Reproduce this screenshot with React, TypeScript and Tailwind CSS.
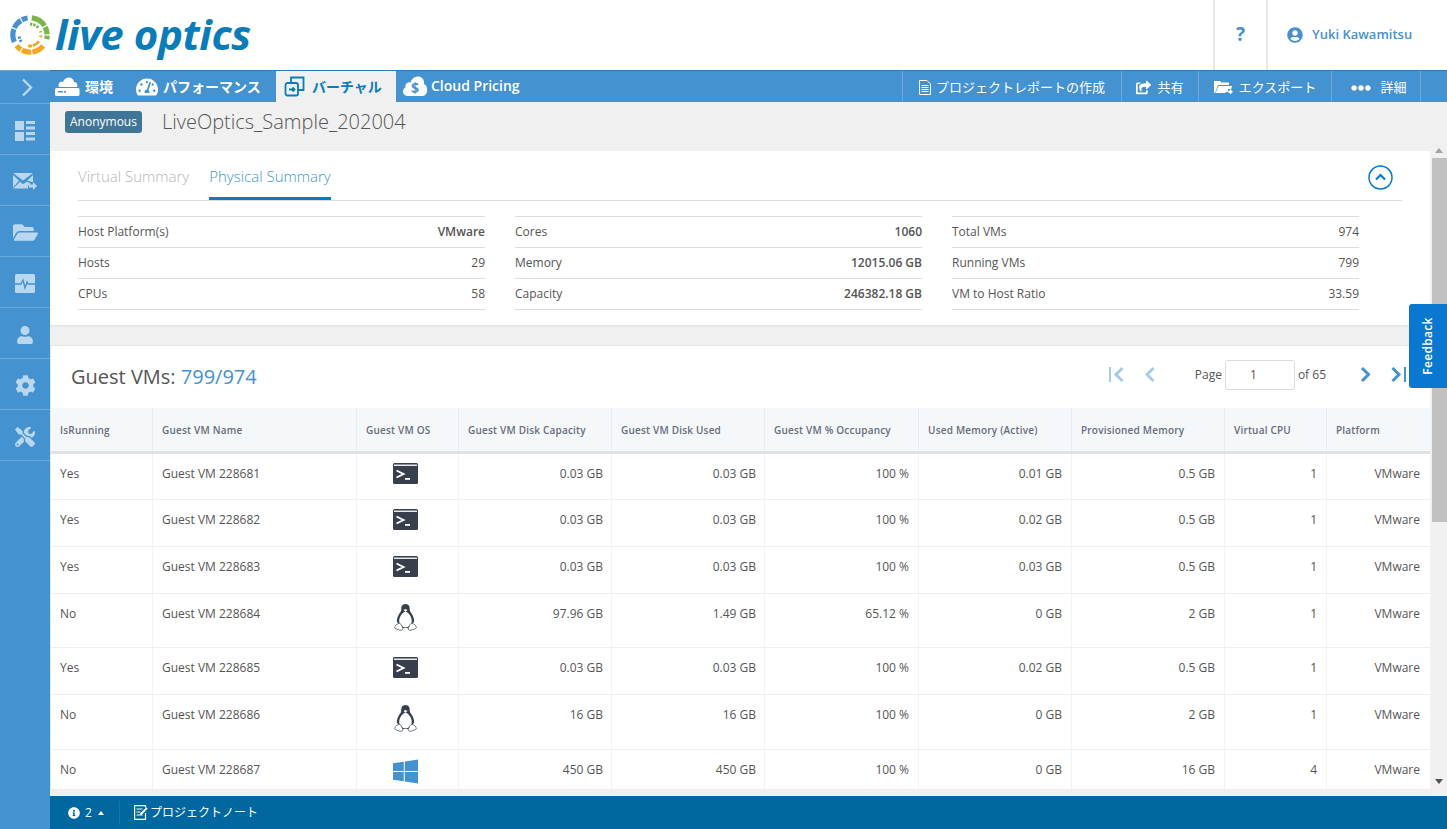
import { FaCog, FaEllipsisH, FaFolderOpen, FaInfoCircle, FaShareSquare, FaTachometerAlt, FaTools, FaUser, FaUserCircle } from "react-icons/fa";

const JP = "font-['Open_Sans','Noto_Sans_CJK_JP',sans-serif]";

type VmRow = {
  running: string;
  name: string;
  os: "terminal" | "linux" | "windows";
  capacity: string;
  used: string;
  occupancy: string;
  active: string;
  provisioned: string;
  cpu: string;
  height: string;
};

const rows: VmRow[] = [
  { running: "Yes", name: "Guest VM 228681", os: "terminal", capacity: "0.03 GB", used: "0.03 GB", occupancy: "100 %", active: "0.01 GB", provisioned: "0.5 GB", cpu: "1", height: "h-[46px]" },
  { running: "Yes", name: "Guest VM 228682", os: "terminal", capacity: "0.03 GB", used: "0.03 GB", occupancy: "100 %", active: "0.02 GB", provisioned: "0.5 GB", cpu: "1", height: "h-[47px]" },
  { running: "Yes", name: "Guest VM 228683", os: "terminal", capacity: "0.03 GB", used: "0.03 GB", occupancy: "100 %", active: "0.03 GB", provisioned: "0.5 GB", cpu: "1", height: "h-[47px]" },
  { running: "No", name: "Guest VM 228684", os: "linux", capacity: "97.96 GB", used: "1.49 GB", occupancy: "65.12 %", active: "0 GB", provisioned: "2 GB", cpu: "1", height: "h-[54px]" },
  { running: "Yes", name: "Guest VM 228685", os: "terminal", capacity: "0.03 GB", used: "0.03 GB", occupancy: "100 %", active: "0.02 GB", provisioned: "0.5 GB", cpu: "1", height: "h-[47px]" },
  { running: "No", name: "Guest VM 228686", os: "linux", capacity: "16 GB", used: "16 GB", occupancy: "100 %", active: "0 GB", provisioned: "2 GB", cpu: "1", height: "h-[55px]" },
  { running: "No", name: "Guest VM 228687", os: "windows", capacity: "450 GB", used: "450 GB", occupancy: "100 %", active: "0 GB", provisioned: "16 GB", cpu: "4", height: "h-[40px]" },
];

const headers = ["IsRunning", "Guest VM Name", "Guest VM OS", "Guest VM Disk Capacity", "Guest VM Disk Used", "Guest VM % Occupancy", "Used Memory (Active)", "Provisioned Memory", "Virtual CPU", "Platform"];

const summary = [
  [["Host Platform(s)", "VMware"], ["Hosts", "29"], ["CPUs", "58"]],
  [["Cores", "1060"], ["Memory", "12015.06 GB"], ["Capacity", "246382.18 GB"]],
  [["Total VMs", "974"], ["Running VMs", "799"], ["VM to Host Ratio", "33.59"]],
];

const COLS = "grid grid-cols-[102px_204px_102px_153px_153px_154px_153px_153px_102px_103px]";
// right padding per numeric column, the source table isn't quite even
const CELL_PAD = ["pr-[8px]", "pr-[8px]", "pr-[9px]", "pr-[9px]", "pr-[9px]", "pr-[9px]", "pr-[10px]"];

function arc(r: number, from: number, to: number) {
  const pt = (a: number) => {
    const t = ((a - 90) * Math.PI) / 180;
    return `${(30 + r * Math.cos(t)).toFixed(2)} ${(30 + r * Math.sin(t)).toFixed(2)}`;
  };
  return `M${pt(from)} A${r} ${r} 0 0 1 ${pt(to)}`;
}

function LogoMark() {
  const outer: [string, number, number][] = [
    ["#7ab648", 6, 58], ["#7ab648", 62, 88], ["#7ab648", 92, 104],
    ["#f5a623", 130, 172], ["#f5a623", 176, 208], ["#f5a623", 212, 232],
    ["#4a90d0", 246, 290], ["#4a90d0", 294, 328], ["#4a90d0", 332, 352],
  ];
  const inner: [string, number, number][] = [
    ["#7ab648", 0, 12], ["#7ab648", 18, 30], ["#7ab648", 36, 48], ["#7ab648", 70, 76],
    ["#f5a623", 92, 102], ["#f5a623", 125, 165], ["#f5a623", 170, 190],
    ["#4a90d0", 232, 244], ["#4a90d0", 250, 262],
  ];
  return (
    <svg width="40" height="40" viewBox="9 9 42 42" aria-hidden>
      {outer.map(([c, a, b]) => (
        <path key={`o${a}`} d={arc(18, a, b)} fill="none" stroke={c} strokeWidth="5.500" />
      ))}
      {inner.map(([c, a, b]) => (
        <path key={`i${a}`} d={arc(11.5, a, b)} fill="none" stroke={c} strokeWidth="3" />
      ))}
    </svg>
  );
}

function TerminalIcon() {
  return (
    <svg width="25" height="21" viewBox="0 0 25 21" aria-hidden>
      <rect width="25" height="21" rx="1.5" fill="#373f4d" />
      <rect x="1" y="1.5" width="23" height="1.5" fill="#e8e8e8" />
      <path d="M3.500 7.500l7 3.500-7 3.500" fill="none" stroke="#fff" strokeWidth="1.900" />
      <rect x="12" y="15" width="5" height="1.8" fill="#fff" />
    </svg>
  );
}

function TuxIcon() {
  return (
    <svg width="25" height="30" viewBox="0 0 25 30" aria-hidden>
      <path d="M12.500 1c-3.400 0-4.400 2.800-4.200 5.600.1 2-2 3.600-3.300 6.600-.8 1.800-1.300 3.600-1.100 5.400L8 25h9l4.100-6.400c.2-1.800-.3-3.600-1.100-5.400-1.300-3-3.400-4.600-3.300-6.600C16.900 3.800 15.900 1 12.500 1z" fill="#373f4d" />
      <path d="M12.500 8.500c-3 1-6.300 5-6.300 9.500 0 3.500 3 6.500 6.300 6.500s6.300-3 6.300-6.500c0-4.500-3.300-8.500-6.300-9.500z" fill="#fff" />
      <path d="M10.500 7l2-1 2 1-2 1.800z" fill="#fff" />
      <path d="M4.500 21c1-1 2.600-.8 3.500.5l1.800 3.500c.5 1.600-1 2.700-2.800 2.200l-4-1.300c-1.300-.5-1.700-1.200-1-2.400.6-1 .5-1.700 2.500-2.500zM20.500 21c-1-1-2.600-.8-3.500.5L15.200 25c-.5 1.600 1 2.700 2.800 2.200l4-1.300c1.300-.5 1.700-1.200 1-2.400-.6-1-.5-1.700-2.500-2.500z" fill="#fff" stroke="#373f4d" strokeWidth="0.7" />
    </svg>
  );
}

function WindowsIcon() {
  return (
    <svg width="25" height="25" viewBox="0 0 25 25" fill="#4592d0" aria-hidden>
      <path d="M0 4.200l10.800-1.500v9.200H0zM11.800 2.500L25 .5v11.400H11.800zM0 12.900h10.800v9.400L0 20.800zM11.800 12.900H25V24.500l-13.200-2z" />
    </svg>
  );
}

function OsIcon({ os }: { os: VmRow["os"] }) {
  if (os === "terminal") return <TerminalIcon />;
  if (os === "linux") return <TuxIcon />;
  return <WindowsIcon />;
}

function DashboardIcon() {
  return (
    <svg width="20" height="20" viewBox="0 0 20 20" fill="#b9d7ef" aria-hidden>
      <rect width="9" height="9" />
      <rect y="11" width="9" height="9" />
      <rect x="11" width="9" height="3" />
      <rect x="11" y="5.500" width="9" height="3" />
      <rect x="11" y="11" width="9" height="3" />
      <rect x="11" y="16.500" width="9" height="3" />
    </svg>
  );
}

function MailArrowIcon() {
  return (
    <svg width="24" height="17" viewBox="0 0 24 17" fill="#b9d7ef" aria-hidden>
      <path d="M0 0l10 7.500L20 0z" />
      <path d="M0 2v12.500l6-6.800zM20 2v7h-1l-4.800-1.300zM7.200 8.800L0 15.500h15v-3h2V10l-3.300-1.200-3.700 2.400z" />
      <path d="M16 11.500h4V9l4 4-4 4v-2.500h-4z" />
    </svg>
  );
}

function PulseIcon() {
  return (
    <svg width="20" height="20" viewBox="0 0 20 20" aria-hidden>
      <rect width="20" height="19" rx="1.500" fill="#b9d7ef" />
      <path d="M0 10h6l2-4 2 8 2-6 1 2h7" fill="none" stroke="#4592d0" strokeWidth="1.300" />
    </svg>
  );
}

function ServerCloudIcon() {
  return (
    <svg width="25" height="21" viewBox="0 0 25 21" aria-hidden>
      <path d="M4 11c-2-4 2-6 4-5 2-6 10-6 11 0 3 0 4 3 3 5z" fill="#fff" />
      <rect y="12" width="24.500" height="8" rx="1.500" fill="#fff" />
      <rect x="3" y="15" width="5" height="1.500" fill="#4592d0" />
      <rect x="9" y="15" width="2" height="1.500" fill="#4592d0" />
    </svg>
  );
}

function CopyIcon() {
  return (
    <svg width="21" height="21" viewBox="0 0 21 21" fill="none" stroke="#0a7cba" strokeWidth="1.800" aria-hidden>
      <path d="M7 7V1.500h12.500V14H14" />
      <rect x="1.500" y="7" width="12.500" height="12.500" rx="2" />
      <path d="M5 13.500h5.500M8.500 11.500l2 2-2 2" />
    </svg>
  );
}

function CloudDollarIcon() {
  return (
    <svg width="26" height="22" viewBox="0 0 26 22" aria-hidden>
      <path d="M5.500 21C1 21-1 15 3.500 12.500 2.500 9 6 6.500 8.500 7.500 11-1 23-.5 22 9c5 2 4 12-1.500 12z" fill="#fff" />
      <text x="13" y="17.500" textAnchor="middle" fontSize="14" fontWeight="700" fill="#4592d0" fontFamily="Open Sans">$</text>
    </svg>
  );
}

function ReportIcon() {
  return (
    <svg width="12" height="15" viewBox="0 0 12 15" fill="none" stroke="#fff" strokeWidth="1" aria-hidden>
      <path d="M.5.500h7.500l3.500 3.500v10.500H.5z" />
      <path d="M2.500 5.500h7M2.500 7.500h7M2.500 9.500h7M2.500 11.500h7" />
    </svg>
  );
}

function NoteIcon() {
  return (
    <svg width="14" height="15" viewBox="0 0 14 15" fill="none" stroke="#fff" strokeWidth="1.200" aria-hidden>
      <path d="M11.500 8v6.400H.6V.6h10.900v2" />
      <path d="M2.500 4h6M2.500 7h4M2.500 10h6" />
      <path d="M6.500 9.500L13 3" strokeWidth="2" />
    </svg>
  );
}

function ExportFolderIcon() {
  return (
    <svg width="19" height="15" viewBox="0 0 19 15" fill="#fff" aria-hidden>
      <path d="M0 1h6l1.500 1.500H15V5H4L1 13H0z" />
      <path d="M4.500 6H18l-.800 3H14v3h-2.500v1H1.500z" />
      <path d="M14.500 10.500H16V9l3 2.700-3 2.800v-1.500h-1.500z" />
    </svg>
  );
}

function PagerArrow({ dir, bar, light }: { dir: "left" | "right"; bar?: boolean; light?: boolean }) {
  const stroke = light ? "#a5cbe9" : "#4592d0";
  return (
    <svg width="16" height="17" viewBox="0 0 16 17" fill="none" stroke={stroke} strokeWidth="3" aria-hidden>
      {dir === "left" ? <path d={bar ? "M14.500 2L8 8.500l6.500 6.500" : "M11.500 2L5 8.500l6.500 6.500"} /> : <path d={bar ? "M1.500 2L8 8.500 1.500 15" : "M5 2l6.500 6.500L5 15"} />}
      {bar && <path d={dir === "left" ? "M2 1v15" : "M14 1v15"} strokeWidth="2" />}
    </svg>
  );
}

export default function App() {
  const sideIcons = [
    <DashboardIcon key="a" />,
    <MailArrowIcon key="b" />,
    <FaFolderOpen key="c" className="text-[25px] text-[#b9d7ef]" />,
    <PulseIcon key="d" />,
    <FaUser key="e" className="text-[18px] text-[#b9d7ef]" />,
    <FaCog key="f" className="text-[21px] text-[#b9d7ef]" />,
    <FaTools key="g" className="text-[20px] text-[#b9d7ef]" />,
  ];

  return (
    <div className={`${JP} relative flex h-[829px] w-[1447px] flex-col overflow-hidden bg-[#f0f0f0] text-[12px] text-[#555]`}>
      <header className="flex h-[70px] shrink-0 items-center bg-white">
        <div className="ml-[10px] flex items-center">
          <LogoMark />
          <span className="ml-[5px] -mt-[3px] font-['Open_Sans',sans-serif] text-[42px] leading-none font-bold tracking-[-0.4px] text-[#0a7cba] italic">live optics</span>
        </div>
        <div className="ml-auto flex h-full">
          <div className="flex w-[53px] items-center justify-center border-l-2 border-[#e6e6e6] pb-[2px] text-[19px] font-bold text-[#4592d0]">?</div>
          <div className="flex w-[181px] items-center border-l-2 border-[#e6e6e6] pl-[19px] text-[#4a90d0]">
            <FaUserCircle className="text-[16px]" />
            <span className="ml-[9px] text-[13px] font-semibold">Yuki Kawamitsu</span>
          </div>
        </div>
      </header>

      <div className="flex min-h-0 flex-1">
        <aside className="flex w-[50px] shrink-0 flex-col bg-[#4592d0]">
          <div className="flex h-[34px] items-center justify-center border-t border-b border-[#6fa9da] bg-[#4592d0] pl-[4px]">
            <svg width="13" height="19" viewBox="0 0 13 19" fill="none" stroke="#b9d7ef" strokeWidth="2.400" aria-hidden>
              <path d="M2 1.500l8 8-8 8" />
            </svg>
          </div>
          {sideIcons.map((icon, i) => (
            <div key={i} className="flex h-[51px] items-center justify-center border-b border-[#6fa9da] pt-[3px]">
              {icon}
            </div>
          ))}
        </aside>

        <div className="flex min-w-0 flex-1 flex-col">
          <nav className="flex h-[32px] shrink-0 items-center border-t border-[#2f79b5] bg-[#4592d0] text-white">
            <div className="ml-[5px] flex w-[81px] items-center gap-[5px] text-[14px] font-semibold">
              <ServerCloudIcon />
              <span className="-mt-[1px]">環境</span>
            </div>
            <div className="flex w-[140px] items-center gap-[5px] text-[14px] font-semibold">
              <FaTachometerAlt className="text-[22px]" />
              <span className="-mt-[1px]">パフォーマンス</span>
            </div>
            <div className="flex h-full w-[120px] items-center gap-[7px] bg-[#f0f0f0] pl-[8px] text-[14px] font-semibold text-[#0a7cba]">
              <CopyIcon />
              <span className="-mt-[1px]">バーチャル</span>
            </div>
            <div className="ml-[6px] -mt-[2px] flex items-center gap-[3px] text-[14px] font-semibold">
              <CloudDollarIcon />
              <span>Cloud Pricing</span>
            </div>
            <div className="ml-auto mr-[26px] flex h-full text-[13px]">
              <div className="flex w-[219px] items-center justify-center gap-[5px] border-l border-[#6fa9da] pt-[2px]">
                <ReportIcon />
                <span>プロジェクトレポートの作成</span>
              </div>
              <div className="flex w-[77px] items-center justify-center gap-[6px] border-l border-[#6fa9da] pt-[2px]">
                <FaShareSquare className="text-[15px]" />
                <span>共有</span>
              </div>
              <div className="flex w-[133px] items-center justify-center gap-[6px] border-l border-[#6fa9da] pt-[2px]">
                <ExportFolderIcon />
                <span>エクスポート</span>
              </div>
              <div className="flex w-[90px] items-center justify-center gap-[9px] border-r border-l border-[#6fa9da] pt-[2px] pl-[6px]">
                <FaEllipsisH className="text-[20px]" />
                <span>詳細</span>
              </div>
            </div>
          </nav>

          <div className="flex h-[49px] shrink-0 items-center pb-[9px] pl-[15px]">
            <span className="rounded-[3px] bg-[#3f7596] px-[5px] py-[3px] text-[12px] leading-[16px] text-white">Anonymous</span>
            <span className="ml-[20px] text-[20px] font-light text-[#555]">LiveOptics_Sample_202004</span>
          </div>

          <div className="flex min-h-0 flex-1">
            <main className="min-w-0 flex-1 overflow-hidden">
              <section className="h-[174px] bg-white pt-[14px] pl-[28px] shadow-[0_1px_2px_rgba(0,0,0,0.08)]">
                <div className="mr-[28px] flex h-[36px] items-start gap-[20px] border-b border-[#dcdcdc] text-[15px] font-light">
                  <span className="text-[#b5b5b5]">Virtual Summary</span>
                  <span className="h-[35px] border-b-[3px] border-[#0a7cba] text-[#3d95cf]">Physical Summary</span>
                  <svg className="ml-auto mr-[9px]" width="25" height="25" viewBox="0 0 25 25" fill="none" stroke="#0a78d0" strokeWidth="1.500" aria-hidden>
                    <circle cx="12.500" cy="12.500" r="11.500" />
                    <path d="M8 14.500l4.500-4.500 4.500 4.500" strokeWidth="2.200" />
                  </svg>
                </div>
                <div className="mt-[15px] flex gap-[30px]">
                  {summary.map((col, i) => (
                    <div key={i} className="w-[407px] border-t border-[#dcdcdc]">
                      {col.map(([label, value]) => (
                        <div key={label} className="flex h-[31px] items-center justify-between border-b border-[#dcdcdc]">
                          <span>{label}</span>
                          <span className={value === "VMware" || i === 1 ? "font-semibold" : ""}>{value}</span>
                        </div>
                      ))}
                    </div>
                  ))}
                </div>
              </section>

              <section className="mt-[20px] border-t border-l border-[#e6e6e6] bg-white">
                <div className="flex h-[62px] items-center pl-[20px]">
                  <h2 className="text-[20px] font-normal text-[#555]">
                    Guest VMs: <span className="text-[#4592d0]">799/974</span>
                  </h2>
                  <div className="mt-[-5px] ml-auto flex items-center">
                    <PagerArrow dir="left" bar light />
                    <span className="ml-[18px]"><PagerArrow dir="left" light /></span>
                    <span className="ml-[37px]">Page</span>
                    <input readOnly value="1" className="ml-[3px] h-[30px] w-[70px] rounded-[3px] border border-[#dcdcdc] pl-[24px] text-[12px] text-[#555]" />
                    <span className="ml-[3px]">of 65</span>
                    <span className="ml-[31px]"><PagerArrow dir="right" /></span>
                    <span className="mr-[23px] ml-[18px]"><PagerArrow dir="right" bar /></span>
                  </div>
                </div>

                <div className={`${COLS} h-[46px] border-b-[3px] border-[#dfe1e4] bg-[#f5f8fb]`}>
                  {headers.map((h) => (
                    <div key={h} className="flex items-center border-r border-[#e7eaee] pt-[2px] pl-[9px] text-[10px] font-semibold tracking-[0.2px] whitespace-nowrap text-[#666c78] last:border-r-0">
                      {h}
                    </div>
                  ))}
                </div>

                {rows.map((r) => (
                  <div key={r.name} className={`${COLS} ${r.height} border-b border-[#eeeeee]`}>
                    <div className="border-r border-[#f3f3f3] pt-[11px] pl-[9px]">{r.running}</div>
                    <div className="border-r border-[#f3f3f3] pt-[11px] pl-[9px]">{r.name}</div>
                    <div className="flex justify-center border-r border-[#f3f3f3] pt-[9px] pr-[5px]"><OsIcon os={r.os} /></div>
                    {[r.capacity, r.used, r.occupancy, r.active, r.provisioned, r.cpu, "VMware"].map((v, i) => (
                      <div key={i} className={`border-r border-[#f3f3f3] pt-[11px] text-right last:border-r-0 ${CELL_PAD[i]}`}>{v}</div>
                    ))}
                  </div>
                ))}
              </section>
            </main>

            <div className="-mt-[3px] flex w-[17px] shrink-0 flex-col items-center bg-[#f1f1f1]">
              <div className="mt-0 ml-[1px] h-0 w-0 border-x-[4px] border-b-[5px] border-x-transparent border-b-[#a3a3a3]" />
              <div className="mt-[5px] h-[364px] w-[15px] self-end bg-[#c1c1c1]" />
              <div className="mt-auto mb-[12px] h-0 w-0 border-x-[4px] border-t-[5px] border-x-transparent border-t-[#505050]" />
            </div>
          </div>

          <footer className="flex h-[33px] shrink-0 items-center bg-[#0067a0] text-white">
            <FaInfoCircle className="ml-[18px] text-[12px]" />
            <span className="ml-[5px]">2</span>
            <span className="ml-[6px] h-0 w-0 border-x-[3px] border-b-[4px] border-x-transparent border-b-white" />
            <span className="ml-[15px] h-[24px] border-l border-[#1277ae]" />
            <span className="ml-[14px]"><NoteIcon /></span>
            <span className="ml-[2px] text-[12px]">プロジェクトノート</span>
          </footer>
        </div>
      </div>

      <div className="absolute top-[304px] right-0 flex h-[84px] w-[38px] items-center justify-center rounded-l-[3px] bg-[#0a78d0]">
        <span className="-rotate-90 text-[12px] font-semibold tracking-[0.3px] text-white">Feedback</span>
      </div>
    </div>
  );
}
